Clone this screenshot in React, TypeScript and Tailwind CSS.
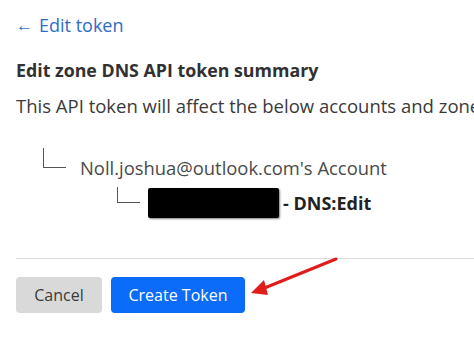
export default function App() {
  return (
    <div className="relative h-[343px] w-[474px] overflow-hidden bg-white font-['Open_Sans',sans-serif] text-[#313131]">
      {/* Back link */}
      <div className="flex items-center gap-[6px] pl-[16px] pt-[12px] text-[18px] leading-[26px] text-[#2f6dc6]">
        <span className="text-[17px]">←</span>
        <span>Edit token</span>
      </div>

      {/* Summary */}
      <h2 className="mt-[20px] whitespace-nowrap pl-[16px] text-[17.8px] font-bold leading-[24px]">
        Edit zone DNS API token summary
      </h2>
      <p className="mt-[11px] whitespace-nowrap pl-[16px] text-[18.5px] leading-[26px] text-[#3a3a3a]">
        This API token will affect the below accounts and zones
      </p>

      {/* Tree */}
      <div className="mt-[35px] flex flex-col gap-[6px]">
        <div className="flex h-[28px] items-center pl-[43px]">
          <span className="-mt-[20px] h-[20px] w-[23px] shrink-0 border-b border-l border-[#555]" />
          <span className="ml-[14px] whitespace-nowrap text-[18.4px] leading-[28px] text-[#4a4a4a]">
            Noll.joshua@outlook.com's Account
          </span>
        </div>
        <div className="flex h-[30px] items-center pl-[117px]">
          <span className="-mt-[16px] h-[16px] w-[23px] shrink-0 border-b border-l border-[#555]" />
          <span className="ml-[8px] h-[30px] w-[131px] shrink-0 rounded-[2px] bg-black shadow-[1px_1px_2px_rgba(0,0,0,0.5)]" />
          <span className="ml-[4px] whitespace-nowrap text-[18px] font-bold leading-[26px] text-[#222]">- DNS:Edit</span>
        </div>
      </div>

      {/* Divider */}
      <div className="ml-[16px] mt-[40px] border-t border-[#dcdcdc]" />

      {/* Actions */}
      <div className="mt-[18px] flex gap-[9px] pl-[16px]">
        <button className="h-[36px] w-[86px] rounded-[4px] bg-[#d9d9d9] text-[16px] text-[#3a3a3a]">
          Cancel
        </button>
        <button className="h-[36px] w-[134px] rounded-[4px] bg-[#0b6cf9] text-[16px] text-white">
          Create Token
        </button>
      </div>

      {/* Annotation arrow */}
      <svg className="absolute left-0 top-0" width="474" height="343" viewBox="0 0 474 343">
        <line x1="336" y1="259" x2="262" y2="289" stroke="#e21b1b" strokeWidth="3" strokeLinecap="round" />
        <polygon points="251,293 264,280 268,295" fill="#e21b1b" />
      </svg>
    </div>
  );
}
